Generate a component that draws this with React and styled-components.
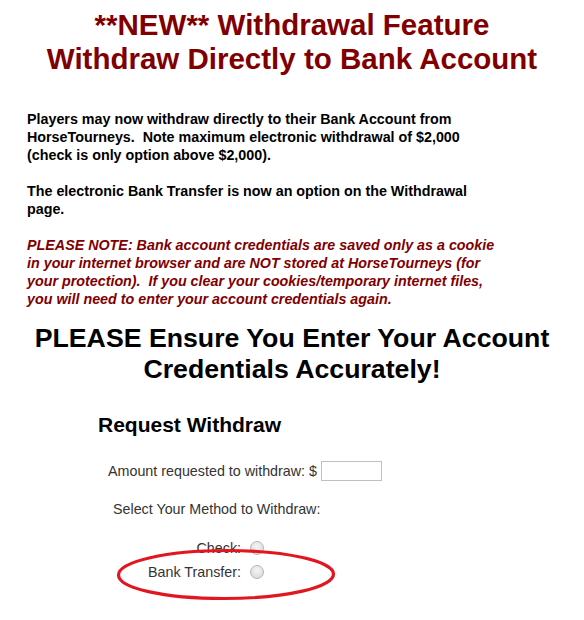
import React from "react";
import styled, { createGlobalStyle } from "styled-components";

const GlobalStyle = createGlobalStyle`
  html, body {
    margin: 0;
    padding: 0;
    background: #ffffff;
  }
  body {
    font-family: "Liberation Sans", Arial, sans-serif;
  }
`;

const Page = styled.div`
  width: 584px;
  min-height: 620px;
  box-sizing: border-box;
  padding: 8px 0 0;
`;

const Banner = styled.h1`
  margin: 0;
  text-align: center;
  font-size: 29.5px;
  line-height: 34px;
  font-weight: bold;
  color: #800000;
`;

const Notes = styled.div`
  margin: 34px 0 0 27px;
  width: 476px;
`;

const Para = styled.p`
  margin: 0;
  font-size: 14.3px;
  line-height: 18px;
  font-weight: bold;
  font-style: ${(p) => (p.$warn ? "italic" : "normal")};
  color: ${(p) => (p.$warn ? "#800000" : "#000000")};

  & + & {
    margin-top: 18px;
  }
`;

const Warning = styled.h2`
  margin: 15px 0 0;
  text-align: center;
  font-size: 26.7px;
  line-height: 31px;
  font-weight: bold;
  color: #000000;
`;

const FormBox = styled.div`
  position: relative;
  margin: 28px 0 0 98px;
  width: 300px;
  font-size: 14.3px;
  color: #333333;
`;

const FormTitle = styled.h3`
  margin: 0;
  font-size: 21px;
  line-height: 24px;
  font-weight: bold;
  color: #000000;
`;

const Line = styled.div`
  display: flex;
  align-items: center;
  gap: 4px;
  margin-top: ${(p) => p.$top}px;
  padding-left: ${(p) => p.$indent}px;
  line-height: 20px;
`;

const AmountInput = styled.input`
  width: 61px;
  height: 20px;
  box-sizing: border-box;
  margin: 0;
  border: 1px solid #bfbfbf;
  background: #fff;
`;

const Choices = styled.div`
  display: grid;
  grid-template-columns: 143px auto;
  align-items: center;
  row-gap: 4px;
  margin-top: 19px;
`;

const ChoiceLabel = styled.label`
  justify-self: end;
  line-height: 20px;
`;

const Radio = styled.span`
  display: inline-block;
  width: 12px;
  height: 12px;
  margin-left: 9px;
  border-radius: 50%;
  border: 1px solid #b5b5b5;
  background: radial-gradient(circle at 50% 35%, #f4f4f4, #d6d6d6);
`;

/* hand-drawn red ring around the bank transfer option */
const Circle = styled.svg`
  position: absolute;
  left: 19px;
  top: 136px;
  overflow: visible;
  pointer-events: none;
`;

export default function App() {
  return (
    <Page>
      <GlobalStyle />
      <Banner>
        **NEW** Withdrawal Feature
        <br />
        Withdraw Directly to Bank Account
      </Banner>

      <Notes>
        <Para>
          Players may now withdraw directly to their Bank Account from
          HorseTourneys.&nbsp; Note maximum electronic withdrawal of $2,000
          (check is only option above $2,000).
        </Para>
        <Para>
          The electronic Bank Transfer is now an option on the Withdrawal page.
        </Para>
        <Para $warn>
          PLEASE NOTE: Bank account credentials are saved only as a cookie in
          your internet browser and are NOT stored at HorseTourneys (for your
          protection).&nbsp; If you clear your cookies/temporary internet files,
          you will need to enter your account credentials again.
        </Para>
      </Notes>

      <Warning>
        PLEASE Ensure You Enter Your Account
        <br />
        Credentials Accurately!
      </Warning>

      <FormBox>
        <FormTitle>Request Withdraw</FormTitle>
        <Line $top={24} $indent={10}>
          Amount requested to withdraw: $ <AmountInput type="text" />
        </Line>
        <Line $top={18} $indent={15}>
          Select Your Method to Withdraw:
        </Line>
        <Choices>
          <ChoiceLabel>Check:</ChoiceLabel>
          <Radio />
          <ChoiceLabel>Bank Transfer:</ChoiceLabel>
          <Radio />
        </Choices>
        <Circle width="218" height="51">
          <path
            d="M 109 1.5 C 170 1.5 216.5 12.5 216.5 25 C 216.5 38 170 49.5 107 49.5 C 46 49.5 1.5 39 1.5 26 C 1.5 12.5 50 1.5 109 1.5 Z"
            fill="none"
            stroke="#e3161f"
            strokeWidth="3.2"
          />
        </Circle>
      </FormBox>
    </Page>
  );
}
